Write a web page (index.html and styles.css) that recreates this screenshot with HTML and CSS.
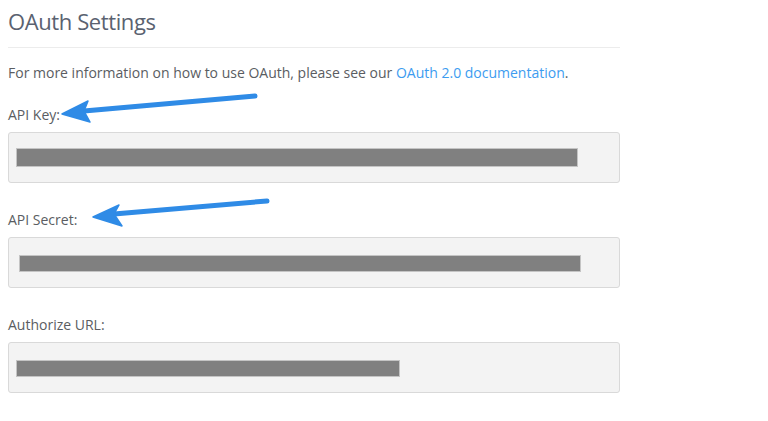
FILE: index.html
```html
<!DOCTYPE html>
<html>
<head>
<meta charset="utf-8">
<link rel="stylesheet" href="styles.css">
</head>
<body>
<div class="page">
  <h2 class="title">OAuth Settings</h2>
  <hr class="rule">
  <p class="intro">For more information on how to use OAuth, please see our <a class="link" href="#">OAuth 2.0 documentation</a>.</p>
  <div class="field">
    <div class="label">API Key:</div>
    <div class="box box-key"><span class="bar bar-key"></span></div>
  </div>
  <div class="field">
    <div class="label">API Secret:</div>
    <div class="box box-secret"><span class="bar bar-secret"></span></div>
  </div>
  <div class="field">
    <div class="label">Authorize URL:</div>
    <div class="box box-url"><span class="bar bar-url"></span></div>
  </div>
  <svg class="arrows" width="768" height="421" viewBox="0 0 768 421">
    <g fill="#2f8be6" stroke="#2f8be6" stroke-linecap="round" stroke-linejoin="round">
      <line x1="255" y1="96" x2="84" y2="111" stroke-width="5"/>
      <polygon points="62,114 88,101 84,111 90,122" stroke-width="1.5"/>
      <line x1="267" y1="201" x2="114" y2="214" stroke-width="5"/>
      <polygon points="93,217 119,205 114,214 122,226" stroke-width="1.5"/>
    </g>
  </svg>
</div>
</body>
</html>
```
FILE: styles.css
```css
html, body {
  margin: 0;
  padding: 0;
  background: #ffffff;
}
.page {
  position: relative;
  width: 612px;
  padding: 6px 8px 0 8px;
  font-family: "Open Sans", "Liberation Sans", sans-serif;
  color: #5a5d62;
}
.title {
  margin: 0;
  font-size: 22px;
  line-height: 30px;
  font-weight: 400;
  letter-spacing: -0.4px;
  color: #5a6270;
}
.rule {
  margin: 11px 0 0 0;
  border: 0;
  border-top: 1px solid #ececec;
  height: 0;
}
.intro {
  margin: 15px 0 0 0;
  font-size: 14px;
  line-height: 20px;
}
.link {
  color: #3d9cf0;
  text-decoration: none;
}
.field {
  margin-top: 22px;
}
.field + .field {
  margin-top: 27px;
}
.label {
  font-size: 14px;
  line-height: 20px;
  margin-bottom: 7px;
}
.box {
  height: 49px;
  background: #f3f3f3;
  border: 1px solid #d9d9d9;
  border-radius: 3px;
  box-sizing: content-box;
  display: flex;
  align-items: flex-start;
}
.bar {
  display: block;
  background: #808080;
  border: 1px solid #c4c4c4;
}
.bar-key {
  margin: 15px 0 0 7px;
  width: 560px;
  height: 17px;
}
.bar-secret {
  margin: 17px 0 0 10px;
  width: 560px;
  height: 15px;
}
.bar-url {
  margin: 17px 0 0 7px;
  width: 382px;
  height: 15px;
}
.arrows {
  position: absolute;
  left: 0;
  top: 0;
  pointer-events: none;
}
```
